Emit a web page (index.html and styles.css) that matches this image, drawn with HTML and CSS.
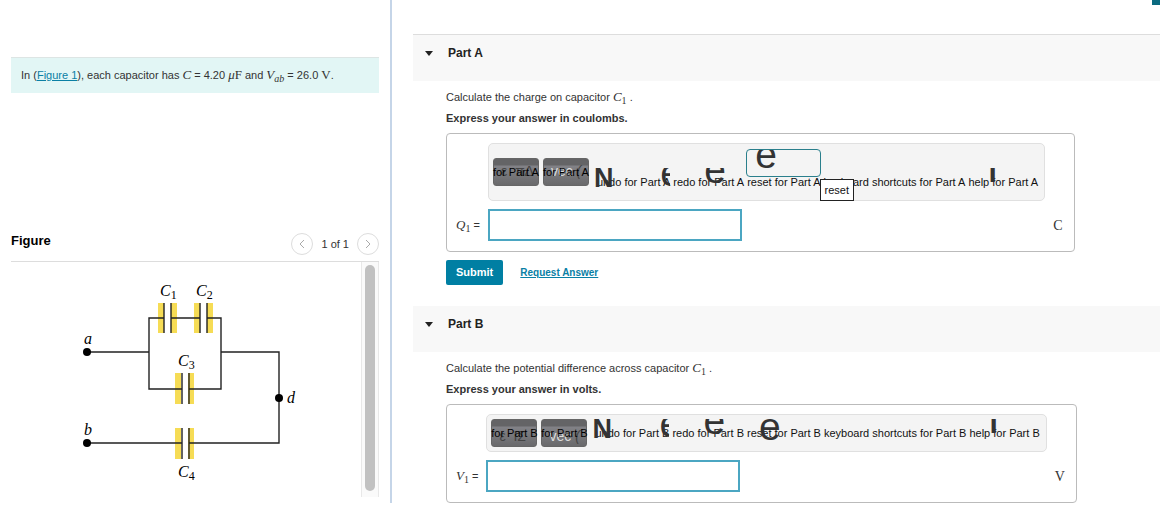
FILE: index.html
```html
<!DOCTYPE html>
<html lang="en">
<head>
  <meta charset="UTF-8">
  <meta name="viewport" content="width=device-width, initial-scale=1.0">
  <title>Capacitors</title>
  <link rel="stylesheet" href="styles.css">
</head>
<body>
  <div class="page">
    <aside class="sidebar">
      <p class="intro">In (<a href="#figure">Figure 1</a>), each capacitor has <span class="math"><i>C</i></span> = 4.20 <span class="math"><i>μ</i>F</span> and <span class="math"><i>V<sub>ab</sub></i></span> = 26.0 <span class="math">V</span>.</p>
      <section class="figure" id="figure">
        <div class="figure-head">
          <h2>Figure</h2>
          <div class="pager">
            <button type="button" aria-label="Previous figure"><svg width="8" height="10" viewBox="0 0 8 10"><path d="M6 1 2 5l4 4"/></svg></button>
            <span>1 of 1</span>
            <button type="button" aria-label="Next figure"><svg width="8" height="10" viewBox="0 0 8 10"><path d="m2 1 4 4-4 4"/></svg></button>
          </div>
        </div>
        <div class="figure-body">
          <svg class="circuit" width="320" height="235" viewBox="0 0 320 235">
            <g class="plate">
              <rect x="147" y="41" width="6" height="30"/><rect x="160" y="41" width="6" height="30"/>
              <rect x="183" y="41" width="6" height="30"/><rect x="196" y="41" width="6" height="30"/>
              <rect x="164" y="111" width="6" height="31"/><rect x="177" y="111" width="6" height="31"/>
              <rect x="164" y="166" width="6" height="31"/><rect x="177" y="166" width="6" height="31"/>
            </g>
            <g class="wire">
              <path d="M76 90H138M153 56h-15v71h33M160 56h29M196 56h14v71h-32M210 90h58v91h-90M171 181H76"/>
              <path d="M153 41v30M160 41v30M189 41v30M196 41v30M171 111v31M178 111v31M171 166v31M178 166v31"/>
            </g>
            <circle cx="76" cy="90" r="4"/>
            <circle cx="76" cy="181" r="4"/>
            <circle cx="268" cy="136" r="4"/>
            <text x="149" y="34">C<tspan class="sub" dy="3">1</tspan></text>
            <text x="185" y="34">C<tspan class="sub" dy="3">2</tspan></text>
            <text x="167" y="104">C<tspan class="sub" dy="3">3</tspan></text>
            <text x="167" y="215">C<tspan class="sub" dy="3">4</tspan></text>
            <text x="73" y="82">a</text>
            <text x="73" y="173">b</text>
            <text x="276" y="141">d</text>
          </svg>
          <div class="scrollbar"><div class="thumb"></div></div>
        </div>
      </section>
    </aside>

    <main>
      <div class="corner-mark"></div>

      <section class="part">
        <header class="part-head first">
          <svg width="8" height="5" viewBox="0 0 8 5"><path d="M0 0h8L4 5z"/></svg>
          <h2>Part A</h2>
        </header>
        <div class="part-body">
          <p>Calculate the charge on capacitor <span class="math"><i>C</i><sub>1</sub></span> .</p>
          <p><b>Express your answer in coulombs.</b></p>
          <div class="answer">
            <div class="toolbar tall">
              <button type="button" class="template"><span class="under dark">ε &nbsp;πΔ</span><span class="name">for Part A</span></button>
              <button type="button" class="template"><span class="under">vec <em>(</em></span><span class="name">for Part A</span></button>
              <button type="button" class="tool undo"><span class="glyph">N</span>undo for Part A</button>
              <button type="button" class="tool redo"><span class="glyph half">e</span><span class="glyph low">e</span>redo for Part A</button>
              <button type="button" class="tool reset"><span class="ring"><span class="glyph">e</span></span>reset for Part A</button>
              <button type="button" class="tool keys">keyboard shortcuts for Part A<span class="tip">reset</span></button>
              <button type="button" class="tool help"><span class="glyph">l</span>help for Part A</button>
            </div>
            <label for="q1"><span class="math"><i>Q</i><sub>1</sub></span> =</label>
            <input type="text" id="q1">
            <span class="unit">C</span>
          </div>
          <div class="actions">
            <button type="button" class="submit">Submit</button>
            <a href="#answer">Request Answer</a>
          </div>
        </div>
      </section>

      <section class="part">
        <header class="part-head">
          <svg width="8" height="5" viewBox="0 0 8 5"><path d="M0 0h8L4 5z"/></svg>
          <h2>Part B</h2>
        </header>
        <div class="part-body">
          <p>Calculate the potential difference across capacitor <span class="math"><i>C</i><sub>1</sub></span> .</p>
          <p><b>Express your answer in volts.</b></p>
          <div class="answer">
            <div class="toolbar">
              <button type="button" class="template"><span class="under low dark">ε &nbsp;ΙΣ</span><span class="name">for Part B</span></button>
              <button type="button" class="template"><span class="under low">vec <em>(</em></span><span class="name">for Part B</span></button>
              <button type="button" class="tool undo"><span class="glyph">N</span>undo for Part B</button>
              <button type="button" class="tool redo"><span class="glyph half">e</span><span class="glyph low">e</span>redo for Part B</button>
              <button type="button" class="tool reset"><span class="glyph">e</span>reset for Part B</button>
              <button type="button" class="tool keys">keyboard shortcuts for Part B</button>
              <button type="button" class="tool help"><span class="glyph">l</span>help for Part B</button>
            </div>
            <label for="v1"><span class="math"><i>V</i><sub>1</sub></span> =</label>
            <input type="text" id="v1">
            <span class="unit">V</span>
          </div>
        </div>
      </section>
    </main>
  </div>
</body>
</html>
```
FILE: styles.css
```css
*, *:before, *:after{
  box-sizing: border-box;
  margin: 0;
  padding: 0;
}
body{
  background: #fff;
  color: #333;
  font-family: "Liberation Sans", Arial, sans-serif;
  font-size: 11px;
  line-height: 21px;
}
button, input{
  font: inherit;
}
a{
  color: #0a80a5;
}
.page{
  display: flex;
  align-items: flex-start;
}
.math{
  font-family: "Liberation Serif", "Times New Roman", serif;
  font-size: 13px;
  line-height: 1;
}
sub{
  font-size: 10px;
  line-height: 0;
  vertical-align: -3px;
}

/* Left column */
.sidebar{
  flex: 0 0 392px;
  padding: 57px 11px 6px;
  border-right: 2px solid #c5d5e8;
}
.intro{
  padding: 7px 10px;
  background: #e2f6f5;
  border-top: 1px solid #dde5e4;
}
.figure{
  margin-top: 137px;
}
.figure-head{
  display: flex;
  justify-content: space-between;
  height: 32px;
  border-bottom: 1px solid #ddd;
}
.figure-head h2{
  font-size: 13px;
  color: #000;
}
.pager{
  display: flex;
  align-items: center;
  gap: 8px;
  height: 28px;
}
.pager button{
  display: flex;
  align-items: center;
  justify-content: center;
  width: 22px;
  height: 22px;
  background: #fff;
  border: 1px solid #ddd;
  border-radius: 50%;
}
.pager path{
  fill: none;
  stroke: #aaa;
}
.figure-body{
  display: flex;
  justify-content: space-between;
}
.circuit text{
  font: italic 16px "Liberation Serif", "Times New Roman", serif;
}
.circuit .sub{
  font-size: 12px;
  font-style: normal;
}
.plate{
  fill: #f6dc55;
}
.wire{
  fill: none;
  stroke: #222;
  stroke-width: 1.4;
}
.scrollbar{
  width: 18px;
  padding: 3px 3px 6px;
  background: #fafafa;
  border-left: 1px solid #e8e8e8;
  border-right: 1px solid #e8e8e8;
}
.thumb{
  height: 100%;
  background: #c1c1c1;
  border-radius: 5px;
}

/* Question parts */
main{
  flex: 1;
  min-width: 0;
  position: relative;
  padding: 34px 0 19px 21px;
}
.corner-mark{
  position: absolute;
  top: 0;
  right: 0;
  width: 8px;
  height: 5px;
  background: #0b6b80;
}
.part-head{
  display: flex;
  align-items: flex-start;
  gap: 15px;
  height: 46px;
  padding: 8px 12px;
  background: #f8f8f8;
}
.part-head.first{
  height: 47px;
  border-top: 1px solid #ddd;
}
.part-head svg{
  margin-top: 8px;
  fill: #222;
}
.part-head h2{
  font-size: 12px;
  color: #222;
}
.part-body{
  padding: 6px 0 21px 33px;
}
.answer{
  display: grid;
  grid-template-columns: auto auto 14px;
  gap: 8px;
  align-items: center;
  width: fit-content;
  margin-top: 4px;
  padding: 9px 7px 10px 9px;
  border: 1px solid #bbb;
  border-radius: 4px;
}
.toolbar{
  grid-column: 2;
  display: flex;
  align-items: flex-end;
  padding: 4px;
  background: #f4f4f4;
  border: 1px solid #e0e0e0;
  border-radius: 5px;
}
.toolbar.tall{
  height: 58px;
}
.template{
  position: relative;
  align-self: center;
  width: 46px;
  height: 28px;
  margin-right: 4px;
  background: linear-gradient(#646466 0 6px, #828287 7px, #69696b);
  border: 1px solid #666;
  border-radius: 3px;
  color: #000;
  white-space: nowrap;
  display: flex;
  align-items: center;
  justify-content: center;
}
.name{
  position: relative;
}
.under{
  position: absolute;
  left: 7px;
  top: 2px;
  color: #ddd;
  font-size: 14px;
  line-height: 20px;
}
.under.low{
  top: 6px;
}
.under.dark, .under em{
  color: #444;
}
.tool{
  position: relative;
  height: 28px;
  padding: 0 2px 0 1px;
  background: none;
  border: none;
  color: #111;
  white-space: nowrap;
}
.undo{
  margin-left: 3px;
}
.glyph{
  position: absolute;
  top: 0;
  left: 2px;
  height: 20px;
  overflow: hidden;
  color: #333;
  font-size: 39px;
  line-height: 20px;
  text-align: left;
}
.undo .glyph{
  left: -2px;
  font-size: 27px;
  font-weight: bold;
}
.redo .half{
  left: -12px;
  width: 10px;
  line-height: 10px;
}
.redo .low{
  left: 32px;
  line-height: 4px;
}
.reset .glyph{
  left: 13px;
  height: 24px;
  line-height: 16px;
}
.ring{
  position: absolute;
  top: -19px;
  left: 0;
  right: 2px;
  height: 28px;
  border: 1px solid #2a7f8c;
  border-radius: 4px;
}
.reset .ring .glyph{
  left: 8px;
  line-height: 10px;
}
.help .glyph{
  left: 21px;
  height: 14px;
  font-size: 30px;
  font-weight: bold;
}
.tip{
  position: absolute;
  z-index: 1;
  top: 11px;
  left: -3px;
  padding: 0 4px;
  background: #fff;
  border: 1px solid #222;
  line-height: 20px;
}
.answer label{
  grid-column: 1;
  white-space: nowrap;
}
.answer input{
  width: 254px;
  height: 32px;
  padding: 0 6px;
  background: #fff;
  border: 2px solid #4ba6c2;
}
.unit{
  font-family: "Liberation Serif", "Times New Roman", serif;
  font-size: 14px;
}
.actions{
  display: flex;
  align-items: center;
  gap: 17px;
  margin-top: 8px;
  font-size: 10px;
  font-weight: bold;
}
.submit{
  height: 25px;
  padding: 0 10px;
  background: #007fa3;
  border: none;
  border-radius: 2px;
  color: #fff;
  font-size: 11px;
}
```
